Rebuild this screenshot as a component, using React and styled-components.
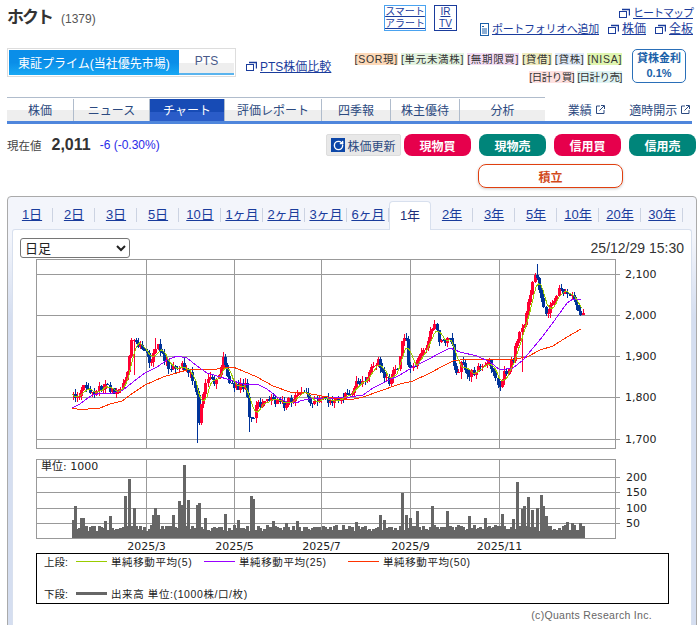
import styled, { createGlobalStyle } from 'styled-components';
import { RotateCw } from 'lucide-react';

const GlobalStyle = createGlobalStyle`
  body {
    margin: 0;
    padding: 0;
    background: #fff;
    font-family: 'Liberation Sans', 'Noto Sans CJK JP', sans-serif;
    color: #333;
    font-size: 12px;
  }
`;

const Page = styled.div`
  width: 698px;
  height: 625px;
  overflow: hidden;
`;

const Header = styled.div`
  display: flex;
  justify-content: space-between;
  height: 97px;
  padding: 0 5px 0 7px;
`;

const LeftCol = styled.div`
  padding-top: 3px;
`;

const TitleRow = styled.div`
  display: flex;
  align-items: baseline;
  height: 25px;
  margin-bottom: 20px;
`;

const Title = styled.h1`
  margin: 0;
  font-size: 17px;
  font-weight: 700;
  letter-spacing: -2px;
  color: #333;
`;

const Code = styled.span`
  margin-left: 9px;
  font-size: 12px;
  color: #555;
`;

const MarketRow = styled.div`
  display: flex;
  align-items: flex-end;
`;

const MarketBox = styled.div`
  display: flex;
  width: 229px;
  height: 29px;
  box-sizing: border-box;
  border: 1px solid #ddd;
  padding: 1px;
`;

const MarketActive = styled.div`
  width: 170px;
  display: flex;
  align-items: center;
  justify-content: center;
  color: #fff;
  font-size: 12px;
  background: linear-gradient(#0a8ee8, #0a8ee8 50%, #18a8f4);
`;

const MarketTab = styled.div`
  flex: 1;
  display: flex;
  align-items: center;
  justify-content: center;
  padding-bottom: 3px;
  color: #4a5a8a;
  font-size: 12px;
  background: linear-gradient(#fff, #fff 50%, #eee 50%, #eee 90%, #5ab4ee 90%);
`;

const Link = styled.a`
  color: #1a3c9c;
  text-decoration: underline;
  white-space: nowrap;
  font-size: ${(p) => p.$size || 12}px;
  letter-spacing: ${(p) => p.$spacing || 0}px;
`;

const IconLink = styled.span`
  display: inline-flex;
  align-items: center;
  gap: 3px;
  margin-left: ${(p) => p.$gap || 0}px;
`;

const PtsLink = styled(IconLink)`
  margin-left: 10px;
  margin-bottom: 3px;
`;

const RightCol = styled.div`
  width: 339px;
  padding-top: 5px;
`;

const AlertRow = styled.div`
  display: flex;
  height: 26px;
`;

const AlertBox = styled.div`
  width: ${(p) => p.$w}px;
  margin-left: ${(p) => p.$ml}px;
  box-sizing: border-box;
  height: 26px;
  border: 1px solid ${(p) => p.$color};
  display: flex;
  flex-direction: column;
  align-items: center;
  justify-content: center;
  line-height: 12px;
`;

const LinkCol = styled.div`
  margin-left: auto;
  display: flex;
  flex-direction: column;
  align-items: flex-end;
  gap: 2px;
  line-height: 14px;
  margin-top: 1px;
`;

const LinkRow = styled.div`
  display: flex;
`;

const TagsRow = styled.div`
  display: flex;
  margin-top: 18px;
`;

const TagsCol = styled.div`
  width: 268px;
  display: flex;
  flex-direction: column;
  align-items: flex-end;
  gap: 6px;
  padding-top: 4px;
`;

const TagLine = styled.div`
  display: flex;
  gap: 3px;
`;

const Tag = styled.span`
  background: ${(p) => p.$bg};
  font-size: 10.5px;
  line-height: 12px;
  color: #333;
  white-space: nowrap;
  letter-spacing: ${(p) => p.$spacing}px;
`;

const RateBox = styled.div`
  width: 54px;
  height: 34px;
  margin-left: 10px;
  box-sizing: border-box;
  border: 1px solid #2a6fb8;
  border-radius: 5px;
  color: #1a5fa8;
  font-weight: 700;
  font-size: 11px;
  line-height: 15px;
  display: flex;
  flex-direction: column;
  align-items: center;
  justify-content: center;
`;

const NavBar = styled.div`
  display: flex;
  margin: 0 6px 0 7px;
  height: 27px;
  box-sizing: border-box;
  border-bottom: 3px solid #4f86dc;
`;

const NavTabs = styled.div`
  display: flex;
  border-top: 1px solid #b0bccc;
`;

const NavTab = styled.div`
  width: ${(p) => p.$w}px;
  box-sizing: border-box;
  display: flex;
  align-items: center;
  justify-content: center;
  padding-bottom: 1px;
  font-size: 12px;
  border-right: 1px solid #b0bccc;
  margin-top: 1px;
  color: ${(p) => (p.$active ? '#fff' : '#2c4a80')};
  background: ${(p) =>
    p.$active
      ? 'linear-gradient(#174bb5, #174bb5 60%, #2a5cc8 60%)'
      : 'linear-gradient(#fff, #fff 50%, #eee 50%)'};
  &:last-child {
    border-right: none;
  }
`;

const NavExtra = styled.div`
  flex: 1;
  display: flex;
  align-items: center;
  justify-content: center;
  gap: 4px;
  padding-left: 9px;
  color: #2c4a80;
  font-size: 12px;
`;

const PriceRow = styled.div`
  display: flex;
  align-items: center;
  height: 22px;
  margin-top: 10px;
  padding-left: 7px;
`;

const PriceLabel = styled.span`
  font-size: 11.5px;
  color: #444;
`;

const PriceValue = styled.span`
  margin-left: 10px;
  font-size: 16px;
  font-weight: 700;
  color: #333;
`;

const PriceChange = styled.span`
  margin-left: 9px;
  font-size: 12px;
  color: #2a2ae8;
`;

const RefreshButton = styled.div`
  margin-left: auto;
  width: 75px;
  height: 22px;
  box-sizing: border-box;
  display: flex;
  align-items: center;
  justify-content: center;
  gap: 2px;
  background: #e8e8e8;
  border: 1px solid #ddd;
  border-radius: 2px;
  color: #2c4a80;
  font-size: 12px;
  white-space: nowrap;
`;

const RefreshIcon = styled.span`
  width: 14px;
  height: 14px;
  background: #0d47a8;
  color: #fff;
  display: flex;
  align-items: center;
  justify-content: center;
`;

const OrderGroup = styled.div`
  display: flex;
  gap: 8px;
  margin-left: 3px;
  margin-right: 2px;
`;

const OrderButton = styled.div`
  width: 67px;
  height: 22px;
  display: flex;
  align-items: center;
  justify-content: center;
  border-radius: 8px;
  color: #fff;
  font-weight: 700;
  font-size: 12px;
  background: ${(p) => (p.$buy ? '#e6004c' : '#00857a')};
`;

const SavingsRow = styled.div`
  display: flex;
  padding-left: 478px;
  margin-top: 8px;
`;

const SavingsButton = styled.div`
  width: 145px;
  height: 24px;
  box-sizing: border-box;
  display: flex;
  align-items: center;
  justify-content: center;
  border: 1px solid #e04010;
  border-radius: 8px;
  color: #d2491a;
  font-weight: 700;
  font-size: 12px;
  box-shadow: 0 1px 3px rgba(0, 0, 0, 0.2);
`;

const ChartPanel = styled.div`
  margin: 8px 1px 0 7px;
  height: 440px;
  box-sizing: border-box;
  border: 1px solid #aaa;
  border-radius: 4px 4px 0 0;
  padding: 4px 4px 0 4px;
  background: linear-gradient(#f3f5fb, #f3f5fb 40px, #d5def0 120px);
`;

const RangeTabs = styled.div`
  display: flex;
  height: 28px;
  margin-left: -1px;
  position: relative;
  z-index: 1;
`;

const RangeTab = styled.div`
  width: 42px;
  box-sizing: border-box;
  display: flex;
  align-items: center;
  justify-content: center;
  padding-bottom: 3px;
  font-size: 13px;
  margin-bottom: ${(p) => (p.$active ? '-1px' : '0')};
  background: ${(p) => (p.$active ? '#fff' : 'transparent')};
  border: ${(p) => (p.$active ? '1px solid #d8e0ee' : 'none')};
  border-bottom: none;
  border-radius: 4px 4px 0 0;
  color: ${(p) => (p.$active ? '#1f2f7a' : '#1a3c9c')};
  text-decoration: ${(p) => (p.$active ? 'none' : 'underline')};
  position: relative;
  &::after {
    content: '';
    display: ${(p) => (p.$active ? 'none' : 'block')};
    position: absolute;
    right: 0;
    top: 7px;
    height: 14px;
    width: 1px;
    background: #ccd3e2;
  }
`;

const ChartBody = styled.div`
  height: 395px;
  background: #fff;
  border: 1px solid #d8e0ee;
  border-bottom: none;
  border-radius: 3px 3px 0 0;
`;

const ChartTop = styled.div`
  display: flex;
  justify-content: space-between;
  align-items: center;
  height: 20px;
  padding: 8px 7px 0 7px;
`;

const Select = styled.select`
  width: 110px;
  height: 20px;
  font-family: 'Liberation Sans', 'Noto Sans CJK JP', sans-serif;
  font-size: 13px;
  color: #222;
  background: #fff;
  border: 1px solid #767676;
  border-radius: 3px;
`;

const DateText = styled.span`
  font-size: 14px;
  color: #333;
`;

const ChartSvg = styled.svg`
  display: block;
  margin-left: 17px;
  font-family: 'DejaVu Sans', 'Noto Sans CJK JP', sans-serif;
`;

const Legend = styled.div`
  width: 633px;
  height: 51px;
  margin-left: 23px;
  box-sizing: border-box;
  border: 1px solid #000;
  padding: 0 7px;
  display: flex;
  flex-direction: column;
  justify-content: space-between;
  font-size: 10.5px;
  color: #222;
`;

const LegendRow = styled.div`
  display: flex;
  align-items: center;
  height: 14px;
  margin: 0 0 3px;
`;

const LegendLabel = styled.span`
  width: 32px;
`;

const LegendLine = styled.span`
  width: 31px;
  height: ${(p) => p.$h || 1}px;
  background: ${(p) => p.$color};
  margin-right: 4px;
`;

const LegendText = styled.span`
  width: ${(p) => p.$w || 'auto'};
  letter-spacing: 0.6px;
  white-space: nowrap;
`;

const Credit = styled.div`
  width: 639px;
  margin-top: 5px;
  text-align: right;
  font-size: 10.5px;
  letter-spacing: 0.3px;
  color: #666;
`;

const WindowIcon = ({ color = '#1a3c9c' }) => (
  <svg width="11" height="10" viewBox="0 0 11 10" fill="none" stroke={color}>
    <rect x="0.5" y="3.5" width="7" height="6" strokeWidth="1" />
    <path d="M3 1.5h7.5v6" strokeWidth="1.4" />
  </svg>
);

const DocIcon = () => (
  <svg width="9" height="13" viewBox="0 0 9 13" fill="none" stroke="#1a5fa8">
    <rect x="0.5" y="0.5" width="8" height="12" />
    <path d="M2 3.5h2M2 6h5M2 8h5M2 10h5" />
  </svg>
);

const ExternalIcon = () => (
  <svg width="9" height="9" viewBox="0 0 9 9" fill="none" stroke="#2c4a80">
    <path d="M4 1H.5v7.5H8V5" />
    <path d="M3.5 5.5L8 1M5 .5h3.5V4" />
  </svg>
);

const closePoints = [
  [72, 398], [80, 392], [83, 383], [88, 388], [93, 395], [100, 387], [106, 383], [112, 393],
  [120, 391], [125, 380], [129, 350], [133, 338], [137, 347], [142, 350], [147, 357], [149, 363],
  [153, 350], [157, 342], [162, 358], [167, 365], [173, 365], [180, 365], [187, 370], [192, 378],
  [196, 393], [198, 430], [201, 403], [205, 382], [209, 377], [213, 385], [218, 373], [223, 357],
  [227, 377], [233, 388], [238, 387], [245, 385], [249, 420], [252, 417], [257, 403], [263, 405],
  [270, 400], [277, 402], [283, 405], [288, 400], [295, 398], [302, 388], [308, 400], [313, 405],
  [320, 398], [330, 402], [338, 397], [350, 393], [355, 385], [363, 378], [372, 367], [377, 358],
  [382, 375], [387, 382], [397, 367], [402, 340], [406, 343], [408, 367], [413, 368], [418, 353],
  [425, 348], [431, 327], [435, 323], [438, 345], [446, 340], [451, 342], [453, 367], [456, 377],
  [460, 365], [464, 367], [468, 377], [477, 368], [483, 363], [488, 358], [493, 375], [499, 388],
  [503, 375], [508, 367], [513, 357], [517, 337], [522, 330], [527, 300], [532, 285], [536, 273],
  [538, 287], [542, 303], [546, 315], [550, 307], [555, 302], [559, 287], [563, 298], [567, 292],
  [572, 298], [577, 310], [581, 315],
];

const ma25 = [
  [72, 408], [80, 404], [88, 398], [93, 395], [102, 393], [113, 393], [123, 390], [133, 382],
  [145, 373], [157, 367], [167, 360], [177, 356], [187, 358], [197, 366], [207, 373], [217, 376],
  [230, 380], [243, 384], [257, 384], [267, 389], [277, 397], [287, 402], [297, 403], [300, 401],
  [313, 398], [333, 398], [350, 397], [363, 395], [373, 388], [387, 381], [400, 375], [413, 367],
  [427, 360], [440, 353], [450, 348], [460, 352], [477, 356], [490, 362], [500, 370], [513, 368],
  [523, 360], [533, 348], [543, 336], [557, 317], [567, 303], [573, 299], [581, 299],
];

const ma50 = [
  [72, 408], [77, 409], [88, 409], [100, 408], [110, 404], [122, 401], [133, 393], [145, 385],
  [163, 377], [180, 372], [187, 370], [197, 369], [217, 369], [227, 367], [233, 367], [243, 371],
  [257, 377], [273, 386], [290, 392], [300, 392], [317, 395], [333, 398], [350, 400], [363, 397],
  [380, 391], [400, 384], [413, 381], [430, 373], [443, 366], [453, 361], [467, 359], [490, 359],
  [510, 360], [527, 357], [540, 350], [553, 346], [567, 337], [581, 329],
];

const spikes = [
  [72, 18], [74, 32], [80, 20], [83, 20], [105, 17], [109, 22], [125, 42], [128, 59], [132, 30],
  [152, 23], [155, 30], [158, 23], [172, 23], [178, 37], [182, 33], [184, 73], [187, 38], [197, 33],
  [199, 35], [205, 20], [224, 24], [238, 18], [250, 42], [252, 39], [273, 17], [285, 15], [297, 17],
  [355, 16], [380, 23], [383, 18], [402, 45], [405, 23], [410, 20], [417, 27], [432, 32], [446, 27],
  [468, 22], [483, 20], [502, 24], [513, 19], [517, 56], [520, 29], [524, 32], [528, 41], [532, 28],
  [537, 30], [540, 43], [543, 32], [546, 22], [566, 16], [572, 15], [581, 15],
];

const longWicks = [
  [197, 'low', 443], [199, 'low', 425], [249, 'low', 432], [537, 'high', 264], [499, 'low', 391],
  [133, 'low', 375], [155, 'high', 338], [459, 'low', 379], [520, 'low', 372],
];

const STEP = 2.18;
const BAR_COUNT = 235;

let seed = 1379;
const rnd = () => {
  seed = (seed * 16807) % 2147483647;
  return seed / 2147483647;
};

const interp = (points, x) => {
  for (let i = 1; i < points.length; i++) {
    if (x <= points[i][0]) {
      const [x0, y0] = points[i - 1];
      const [x1, y1] = points[i];
      return y0 + ((y1 - y0) * (x - x0)) / (x1 - x0);
    }
  }
  return points[points.length - 1][1];
};

const bars = [];
for (let i = 0; i < BAR_COUNT; i++) {
  const x = 72 + i * STEP;
  const close = interp(closePoints, x) + (rnd() - 0.5) * 8;
  const open = i ? bars[i - 1].close : close + 1;
  let high = Math.min(open, close) - rnd() * 5;
  let low = Math.max(open, close) + rnd() * 5;
  longWicks.forEach(([wx, kind, val]) => {
    if (Math.abs(wx - x) <= STEP / 2) {
      if (kind === 'low') low = val;
      else high = val;
    }
  });
  let vol = 7 + rnd() * 6;
  spikes.forEach(([sx, h]) => {
    if (Math.abs(sx - x) <= STEP / 2) vol = h;
  });
  bars.push({ x, open, close, high, low, vol });
}

const ma5 = bars.map((b, i) => {
  const slice = bars.slice(Math.max(0, i - 4), i + 1);
  return [b.x, slice.reduce((s, v) => s + v.close, 0) / slice.length];
});

const toLine = (pts) => pts.map(([x, y]) => `${x.toFixed(1)},${y.toFixed(1)}`).join(' ');

const priceGrid = [
  [274, '2,100'],
  [315, '2,000'],
  [356, '1,900'],
  [397, '1,800'],
  [439, '1,700'],
];
const volumeGrid = [
  [477, '200'],
  [492, '150'],
  [508, '100'],
  [523, '50'],
];
const months = [
  [146.5, '2025/3'],
  [234.5, '2025/5'],
  [321.5, '2025/7'],
  [410.5, '2025/9'],
  [499.5, '2025/11'],
];

const Chart = () => (
  <ChartSvg width="660" height="295" viewBox="30 258 660 295">
    <g stroke="#999" shapeRendering="crispEdges" fill="none">
      <rect x="36.5" y="259.5" width="579" height="189" />
      <rect x="36.5" y="459.5" width="579" height="79" />
      {priceGrid.map(([y]) => (
        <line key={y} x1="36" x2="620" y1={y + 0.5} y2={y + 0.5} />
      ))}
      {volumeGrid.map(([y]) => (
        <line key={y} x1="36" x2="620" y1={y + 0.5} y2={y + 0.5} />
      ))}
      {months.map(([x]) => (
        <g key={x}>
          <line x1={x} x2={x} y1="259" y2="448" />
          <line x1={x} x2={x} y1="459" y2="538" />
        </g>
      ))}
    </g>
    <g shapeRendering="crispEdges">
      {bars.map((b) => {
        const up = b.close <= b.open;
        const color = up ? '#ff0033' : '#003399';
        const top = Math.min(b.open, b.close);
        const h = Math.max(1, Math.abs(b.open - b.close));
        const left = Math.floor(b.x);
        return (
          <g key={b.x} fill={color}>
            <rect x={left + 1} y={b.high} width="1" height={b.low - b.high} />
            <rect x={left} y={top} width="3" height={h} />
          </g>
        );
      })}
      <polyline points={toLine(ma50)} fill="none" stroke="#ff3300" />
      <polyline points={toLine(ma25)} fill="none" stroke="#9900ff" />
      <polyline points={toLine(ma5)} fill="none" stroke="#99cc00" />
      {bars.map((b) => (
        <rect key={b.x} x={Math.floor(b.x)} y={538 - b.vol} width="3" height={b.vol} fill="#666" />
      ))}
    </g>
    <g fontSize="11" fill="#222">
      {priceGrid.map(([y, label]) => (
        <text key={y} x="625" y={y + 4}>{label}</text>
      ))}
      {volumeGrid.map(([y, label]) => (
        <text key={y} x="626" y={y + 4}>{label}</text>
      ))}
      {months.map(([x, label]) => (
        <text key={x} x={x} y="550" textAnchor="middle">{label}</text>
      ))}
      <text x="41" y="470">単位: 1000</text>
    </g>
  </ChartSvg>
);

const navTabs = [
  ['株価', 67], ['ニュース', 76], ['チャート', 75, true], ['評価レポート', 97],
  ['四季報', 69], ['株主優待', 69], ['分析', 85],
];

const tagsTop = [
  ['[SOR現]', '#fdd9b8'], ['[単元未満株]', '#e3f3e0'], ['[無期限買]', '#f3dcf3'],
  ['[貸借]', '#f0edc0'], ['[貸株]', '#dfeaf8'], ['[NISA]', '#e0f5b0'],
];
const tagsBottom = [['[日計り買]', '#fde0e0'], ['[日計り売]', '#def3f3']];

const ranges = [
  '1日', '2日', '3日', '5日', '10日', '1ヶ月', '2ヶ月', '3ヶ月', '6ヶ月',
  '1年', '2年', '3年', '5年', '10年', '20年', '30年',
];

const App = () => (
  <Page>
    <GlobalStyle />
    <Header>
      <LeftCol>
        <TitleRow>
          <Title>ホクト</Title>
          <Code>(1379)</Code>
        </TitleRow>
        <MarketRow>
          <MarketBox>
            <MarketActive>東証プライム(当社優先市場)</MarketActive>
            <MarketTab>PTS</MarketTab>
          </MarketBox>
          <PtsLink>
            <WindowIcon />
            <Link>PTS株価比較</Link>
          </PtsLink>
        </MarketRow>
      </LeftCol>
      <RightCol>
        <AlertRow>
          <AlertBox $w={42} $ml={30} $color="#4aa3f0">
            <Link $size={10}>スマート</Link>
            <Link $size={10}>アラート</Link>
          </AlertBox>
          <AlertBox $w={23} $ml={8} $color="#1a3c9c">
            <Link $size={10}>IR</Link>
            <Link $size={10}>TV</Link>
          </AlertBox>
          <LinkCol>
            <IconLink>
              <WindowIcon />
              <Link $size={11} $spacing={-1}>ヒートマップ</Link>
            </IconLink>
            <LinkRow>
              <IconLink>
                <DocIcon />
                <Link $size={11} $spacing={-0.3}>ポートフォリオへ追加</Link>
              </IconLink>
              <IconLink $gap={9}>
                <WindowIcon />
                <Link>株価</Link>
              </IconLink>
              <IconLink $gap={9}>
                <WindowIcon />
                <Link>全板</Link>
              </IconLink>
            </LinkRow>
          </LinkCol>
        </AlertRow>
        <TagsRow>
          <TagsCol>
            <TagLine>
              {tagsTop.map(([label, bg]) => (
                <Tag key={label} $bg={bg} $spacing={0.7}>{label}</Tag>
              ))}
            </TagLine>
            <TagLine>
              {tagsBottom.map(([label, bg]) => (
                <Tag key={label} $bg={bg} $spacing={-0.5}>{label}</Tag>
              ))}
            </TagLine>
          </TagsCol>
          <RateBox>
            <span>貸株金利</span>
            <span>0.1%</span>
          </RateBox>
        </TagsRow>
      </RightCol>
    </Header>
    <NavBar>
      <NavTabs>
        {navTabs.map(([label, w, active]) => (
          <NavTab key={label} $w={w} $active={active}>{label}</NavTab>
        ))}
      </NavTabs>
      <NavExtra>業績 <ExternalIcon /></NavExtra>
      <NavExtra>適時開示 <ExternalIcon /></NavExtra>
    </NavBar>
    <PriceRow>
      <PriceLabel>現在値</PriceLabel>
      <PriceValue>2,011</PriceValue>
      <PriceChange>-6 (-0.30%)</PriceChange>
      <RefreshButton>
        <RefreshIcon><RotateCw size={11} strokeWidth={3} /></RefreshIcon>
        株価更新
      </RefreshButton>
      <OrderGroup>
        <OrderButton $buy>現物買</OrderButton>
        <OrderButton>現物売</OrderButton>
        <OrderButton $buy>信用買</OrderButton>
        <OrderButton>信用売</OrderButton>
      </OrderGroup>
    </PriceRow>
    <SavingsRow>
      <SavingsButton>積立</SavingsButton>
    </SavingsRow>
    <ChartPanel>
      <RangeTabs>
        {ranges.map((r) => (
          <RangeTab key={r} $active={r === '1年'}>{r}</RangeTab>
        ))}
      </RangeTabs>
      <ChartBody>
        <ChartTop>
          <Select defaultValue="d">
            <option value="d">日足</option>
            <option value="w">週足</option>
            <option value="m">月足</option>
          </Select>
          <DateText>25/12/29 15:30</DateText>
        </ChartTop>
        <Chart />
        <Legend>
          <LegendRow>
            <LegendLabel>上段:</LegendLabel>
            <LegendLine $color="#99cc00" />
            <LegendText $w="93px">単純移動平均(5)</LegendText>
            <LegendLine $color="#9900ff" />
            <LegendText $w="109px">単純移動平均(25)</LegendText>
            <LegendLine $color="#ff3300" />
            <LegendText>単純移動平均(50)</LegendText>
          </LegendRow>
          <LegendRow>
            <LegendLabel>下段:</LegendLabel>
            <LegendLine $color="#666" $h={3} />
            <LegendText>出来高 単位:(1000株/口/枚)</LegendText>
          </LegendRow>
        </Legend>
        <Credit>(c)Quants Research Inc.</Credit>
      </ChartBody>
    </ChartPanel>
  </Page>
);

export default App;
